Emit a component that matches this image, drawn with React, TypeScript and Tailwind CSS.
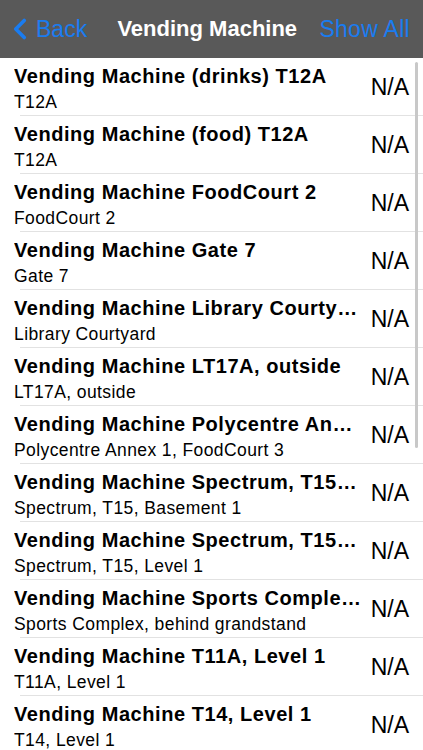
import { ChevronLeft } from "lucide-react";

const machines = [
  { name: "Vending Machine (drinks) T12A", location: "T12A" },
  { name: "Vending Machine (food) T12A", location: "T12A" },
  { name: "Vending Machine FoodCourt 2", location: "FoodCourt 2" },
  { name: "Vending Machine Gate 7", location: "Gate 7" },
  { name: "Vending Machine Library Courtyard", location: "Library Courtyard" },
  { name: "Vending Machine LT17A, outside", location: "LT17A, outside" },
  { name: "Vending Machine Polycentre Annex 1, FoodCourt 3", location: "Polycentre Annex 1, FoodCourt 3" },
  { name: "Vending Machine Spectrum, T15, Basement 1", location: "Spectrum, T15, Basement 1" },
  { name: "Vending Machine Spectrum, T15, Level 1", location: "Spectrum, T15, Level 1" },
  { name: "Vending Machine Sports Complex, behind grandstand", location: "Sports Complex, behind grandstand" },
  { name: "Vending Machine T11A, Level 1", location: "T11A, Level 1" },
  { name: "Vending Machine T14, Level 1", location: "T14, Level 1" },
  { name: "Vending Machine T15, Level 2", location: "T15, Level 2" },
];

export default function App() {
  return (
    <div className="w-[423px] h-[750px] overflow-hidden bg-white font-['Liberation_Sans',Arial,sans-serif] relative">
      {/* Nav bar */}
      <div className="h-[58px] bg-[#595959] flex items-center justify-between pr-[13px]">
        <div className="flex items-center text-[#1a7cf0]">
          <ChevronLeft className="w-[34px] h-[34px] ml-[3px] -mr-[1px]" strokeWidth={2.6} />
          <span className="text-[23px] leading-none">Back</span>
        </div>
        <span className="text-white text-[22px] font-bold leading-none ml-[8px]">Vending Machine</span>
        <span className="text-[#1a7cf0] text-[23px] tracking-[0.3px] leading-none">Show All</span>
      </div>

      {/* List */}
      <div>
        {machines.map((m) => (
          <div key={m.name} className="h-[58px] flex items-center relative">
            <div className="flex-1 min-w-0 pl-[14px] pr-[8px] self-start pt-[6px]">
              <div className="text-[20px] font-bold text-black leading-[24px] tracking-[0.55px] truncate">{m.name}</div>
              <div className="text-[17.5px] text-black leading-[22px] tracking-[0.4px] mt-[3px] truncate">{m.location}</div>
            </div>
            <div className="text-[23px] text-black pr-[14px] leading-none">N/A</div>
            <div className="absolute left-[20px] right-0 bottom-0 h-px bg-[#e2e2e2]" />
          </div>
        ))}
      </div>

      {/* Scroll indicator */}
      <div className="absolute left-[415px] top-[62px] w-[3px] h-[386px] rounded-full bg-[#c8c8c8]" />
    </div>
  );
}
